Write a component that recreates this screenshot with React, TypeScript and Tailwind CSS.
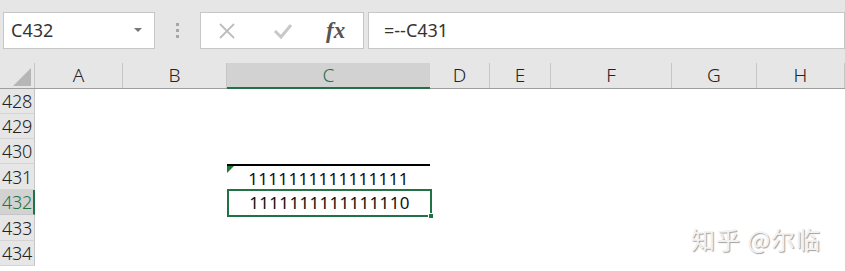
import React from 'react';

const cols = [
  { name: 'A', w: 88 },
  { name: 'B', w: 104 },
  { name: 'C', w: 203 },
  { name: 'D', w: 60 },
  { name: 'E', w: 61 },
  { name: 'F', w: 121 },
  { name: 'G', w: 85 },
  { name: 'H', w: 88 },
];

const rows = [
  { n: 428, h: 25 },
  { n: 429, h: 25 },
  { n: 430, h: 25 },
  { n: 431, h: 26 },
  { n: 432, h: 25 },
  { n: 433, h: 26 },
  { n: 434, h: 25 },
];

const font = { fontFamily: '"Noto Sans", "Noto Sans CJK SC", sans-serif' };

const App: React.FC = () => {
  return (
    <div className="w-[845px] h-[271px] overflow-hidden bg-white relative" style={font}>
      {/* Formula bar */}
      <div className="h-[63px] bg-[#e6e6e6] flex items-start pt-[12px]">
        <div className="ml-[3px] w-[152px] h-[37px] bg-white border border-[#c6c6c6] flex items-center justify-between pl-[7px] pr-[12px]">
          <span className="text-[18px] text-[#333]">C432</span>
          <svg width="8" height="5" viewBox="0 0 8 5"><path d="M0 0 L8 0 L4 4 Z" fill="#777" /></svg>
        </div>
        <div className="w-[45px] h-[37px] flex flex-col items-center justify-center gap-[3px]">
          <span className="w-[3px] h-[3px] bg-[#a6a6a6]" />
          <span className="w-[3px] h-[3px] bg-[#a6a6a6]" />
          <span className="w-[3px] h-[3px] bg-[#a6a6a6]" />
        </div>
        <div className="w-[164px] h-[37px] bg-white border border-[#c6c6c6] flex items-center">
          <svg className="ml-[17px]" width="18" height="18" viewBox="0 0 18 18">
            <path d="M2 2 L16 16 M16 2 L2 16" stroke="#bdbdbd" strokeWidth="1.8" />
          </svg>
          <svg className="ml-[37px]" width="20" height="18" viewBox="0 0 20 18">
            <path d="M2 9 L8 15 L18 3" stroke="#c8c8c8" strokeWidth="3" fill="none" />
          </svg>
          <span
            className="ml-[33px] text-[23px] italic font-bold text-[#555] leading-none"
            style={{ fontFamily: '"Liberation Serif", serif' }}
          >
            fx
          </span>
        </div>
        <div className="ml-[4px] flex-1 h-[37px] bg-white border border-[#c6c6c6] flex items-center pl-[15px]">
          <span className="text-[18px] text-[#333]">=--C431</span>
        </div>
      </div>

      {/* Column headers */}
      <div className="flex h-[26px] bg-[#e6e6e6] border-b border-[#9e9e9e]">
        <div className="w-[35px] shrink-0 border-r border-[#c6c6c6] flex items-end justify-end pr-[3px] pb-[2px]">
          <svg width="18" height="18" viewBox="0 0 18 18"><path d="M18 0 L18 18 L0 18 Z" fill="#b6b6b6" /></svg>
        </div>
        {cols.map((c) =>
          c.name === 'C' ? (
            <div
              key={c.name}
              style={{ width: c.w }}
              className="shrink-0 bg-[#d2d2d2] border-b-2 border-[#217346] flex items-center justify-center text-[19px] leading-none font-light text-[#217346] -mb-px"
            >
              {c.name}
            </div>
          ) : (
            <div
              key={c.name}
              style={{ width: c.w }}
              className="shrink-0 border-r border-[#c6c6c6] flex items-center justify-center text-[19px] leading-none font-light text-[#222]"
            >
              {c.name}
            </div>
          )
        )}
      </div>

      {/* Grid */}
      <div className="flex">
        <div className="w-[35px] shrink-0 flex flex-col">
          {rows.map((r) => (
            <div
              key={r.n}
              style={{ height: r.h }}
              className={
                r.n === 432
                  ? 'bg-[#d2d2d2] border-r-2 border-[#217346] border-b border-b-[#c6c6c6] flex items-center justify-end pr-[1px] text-[18px] leading-none font-light tracking-[-0.3px] text-[#217346]'
                  : 'bg-[#e6e6e6] border-r border-[#c6c6c6] border-b border-b-[#d4d4d4] flex items-center justify-end pr-[2px] text-[18px] leading-none font-light tracking-[-0.3px] text-[#222]'
              }
            >
              {r.n}
            </div>
          ))}
        </div>
        <div className="flex-1 flex flex-col">
          {rows.map((r) => (
            <div key={r.n} style={{ height: r.h }} className="flex">
              <div className="w-[192px] shrink-0" />
              {r.n === 431 ? (
                <div className="w-[203px] shrink-0 relative border-t-2 border-black flex items-center justify-center pt-[2px] text-[17px] text-[#111] tracking-[0.3px]">
                  <span className="absolute left-0 top-0 w-0 h-0 border-t-[7px] border-t-[#1e7a2e] border-r-[7px] border-r-transparent" />
                  1111111111111111
                </div>
              ) : r.n === 432 ? (
                <div className="w-[205px] shrink-0 relative border-2 border-[#217346] -mt-px h-[28px] flex items-center justify-center text-[17px] text-[#111] tracking-[0.3px]">
                  1111111111111110
                  <span className="absolute -right-[4px] -bottom-[4px] w-[6px] h-[6px] bg-[#217346] border border-white" />
                </div>
              ) : null}
            </div>
          ))}
        </div>
      </div>

      {/* Watermark */}
      <div
        className="absolute left-[691px] top-[221px] text-[24px] text-[#f2f2f2] tracking-[1px]"
        style={{ fontFamily: '"Noto Sans CJK SC", sans-serif', textShadow: '1px 1px 1px #a0a0a0' }}
      >
        知乎 @尔临
      </div>
    </div>
  );
};

export default App;
